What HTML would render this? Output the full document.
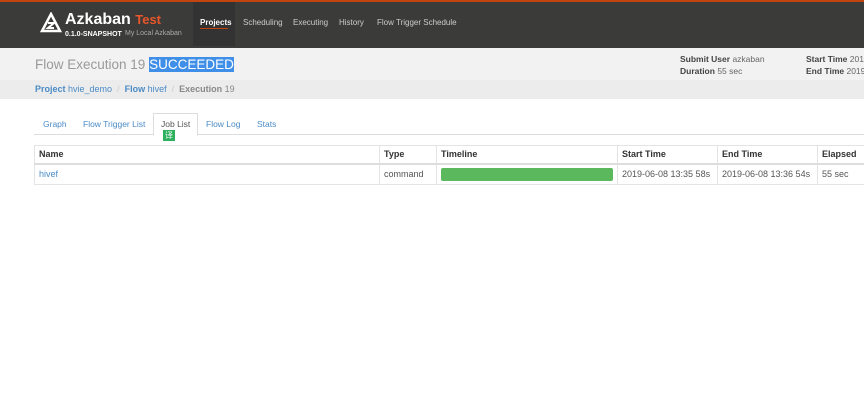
<!DOCTYPE html>
<html><head><style>
body{margin:0;width:864px;height:404px;overflow:hidden;background:#fff;font-family:"Liberation Sans","Noto Sans CJK SC",sans-serif;position:relative}
.nav{position:absolute;top:0;left:0;width:864px;height:48px;background:#3b3b39;border-top:2px solid #c2440f;box-sizing:border-box}
.a{position:absolute}
.hdr{position:absolute;top:48px;left:0;width:864px;height:32px;background:#f2f2f2;border-bottom:1px solid #e3e3e3}
.bc{position:absolute;top:80px;left:0;width:864px;height:19px;background:#ececec}
.lnk{color:#4a8bc6}
td,th{font-size:9px;text-align:left;padding:0 4px;border:1px solid #e4e4e4;color:#555;box-sizing:border-box}
th{color:#333;font-weight:bold;height:18px;border-bottom:2px solid #ddd}
td{height:21px}
table{position:absolute;left:34px;top:145px;border-collapse:collapse;width:832px}
</style></head><body>
<div class="nav">
<svg class="a" style="left:40px;top:10px" width="22" height="22" viewBox="0 0 22 22"><path d="M11 2 L20 19 L2 19 Z" fill="none" stroke="#fff" stroke-width="2.5"/><path d="M8 11 h6 l-6 5 h6" fill="none" stroke="#fff" stroke-width="2"/></svg>
<div class="a" style="left:65px;top:9px;color:#fff;font-weight:bold;font-size:16px">Azkaban <span style="color:#e8562a;font-size:13px">Test</span></div>
<div class="a" style="left:65px;top:29px;color:#fff;font-weight:bold;font-size:7px">0.1.0-SNAPSHOT</div>
<div class="a" style="left:125px;top:28px;color:#aaa;font-size:7px">My Local Azkaban</div>
<div class="a" style="left:193px;top:0;width:42px;height:44px;background:#333"></div>
<div class="a" style="left:200px;top:16px;color:#fff;font-weight:bold;font-size:8px">Projects</div>
<div class="a" style="left:200px;top:26px;width:28px;height:1px;background:#c2440f"></div>
<div class="a" style="left:243px;top:16px;color:#ccc;font-size:8px">Scheduling</div>
<div class="a" style="left:293px;top:16px;color:#ccc;font-size:8px">Executing</div>
<div class="a" style="left:339px;top:16px;color:#ccc;font-size:8px">History</div>
<div class="a" style="left:377px;top:16px;color:#ccc;font-size:8px">Flow Trigger Schedule</div>
</div>
<div class="hdr"></div>
<div class="a" style="left:35px;top:57px;font-size:13.5px;color:#999">Flow Execution 19 <span style="background:#3f8fe8;color:#fff">SUCCEEDED</span></div>
<div class="a" style="left:680px;top:53px;font-size:8.5px;color:#666;line-height:12px"><b style="color:#444">Submit User</b> azkaban<br><b style="color:#444">Duration</b> 55 sec</div>
<div class="a" style="left:806px;top:53px;font-size:8.5px;color:#666;line-height:12px;white-space:nowrap"><b style="color:#444">Start Time</b> 2019<br><b style="color:#444">End Time</b> 2019</div>
<div class="bc"></div>
<div class="a" style="left:35px;top:84px;font-size:9px;color:#4a8bc6"><b>Project</b> hvie_demo <span style="color:#ccc">&nbsp;/&nbsp;</span> <b>Flow</b> hivef <span style="color:#ccc">&nbsp;/&nbsp;</span> <b style="color:#888">Execution</b> <span style="color:#888">19</span></div>
<div class="a" style="left:34px;top:134px;width:830px;height:1px;background:#ddd"></div>
<div class="a" style="left:153px;top:113px;width:43px;height:21px;border:1px solid #ddd;border-bottom:1px solid #fff;background:#fff"></div>
<div class="a" style="left:43px;top:119px;font-size:8.5px;color:#4a8bc6">Graph</div>
<div class="a" style="left:83px;top:119px;font-size:8.5px;color:#4a8bc6">Flow Trigger List</div>
<div class="a" style="left:161px;top:119px;font-size:8.5px;color:#555">Job List</div>
<div class="a" style="left:163px;top:130px;width:12px;height:11px;background:#2cb05e;color:#fff;font-size:8px;text-align:center;line-height:11px">译</div>
<div class="a" style="left:206px;top:119px;font-size:8.5px;color:#4a8bc6">Flow Log</div>
<div class="a" style="left:257px;top:119px;font-size:8.5px;color:#4a8bc6">Stats</div>
<table><tr><th style="width:345px">Name</th><th style="width:57px">Type</th><th style="width:181px">Timeline</th><th style="width:100px">Start Time</th><th style="width:100px">End Time</th><th>Elapsed</th></tr>
<tr><td class="lnk">hivef</td><td>command</td><td><div style="background:#5cb85c;height:13px;border-radius:2px"></div></td><td>2019-06-08 13:35 58s</td><td>2019-06-08 13:36 54s</td><td>55 sec</td></tr></table>
</body></html>
